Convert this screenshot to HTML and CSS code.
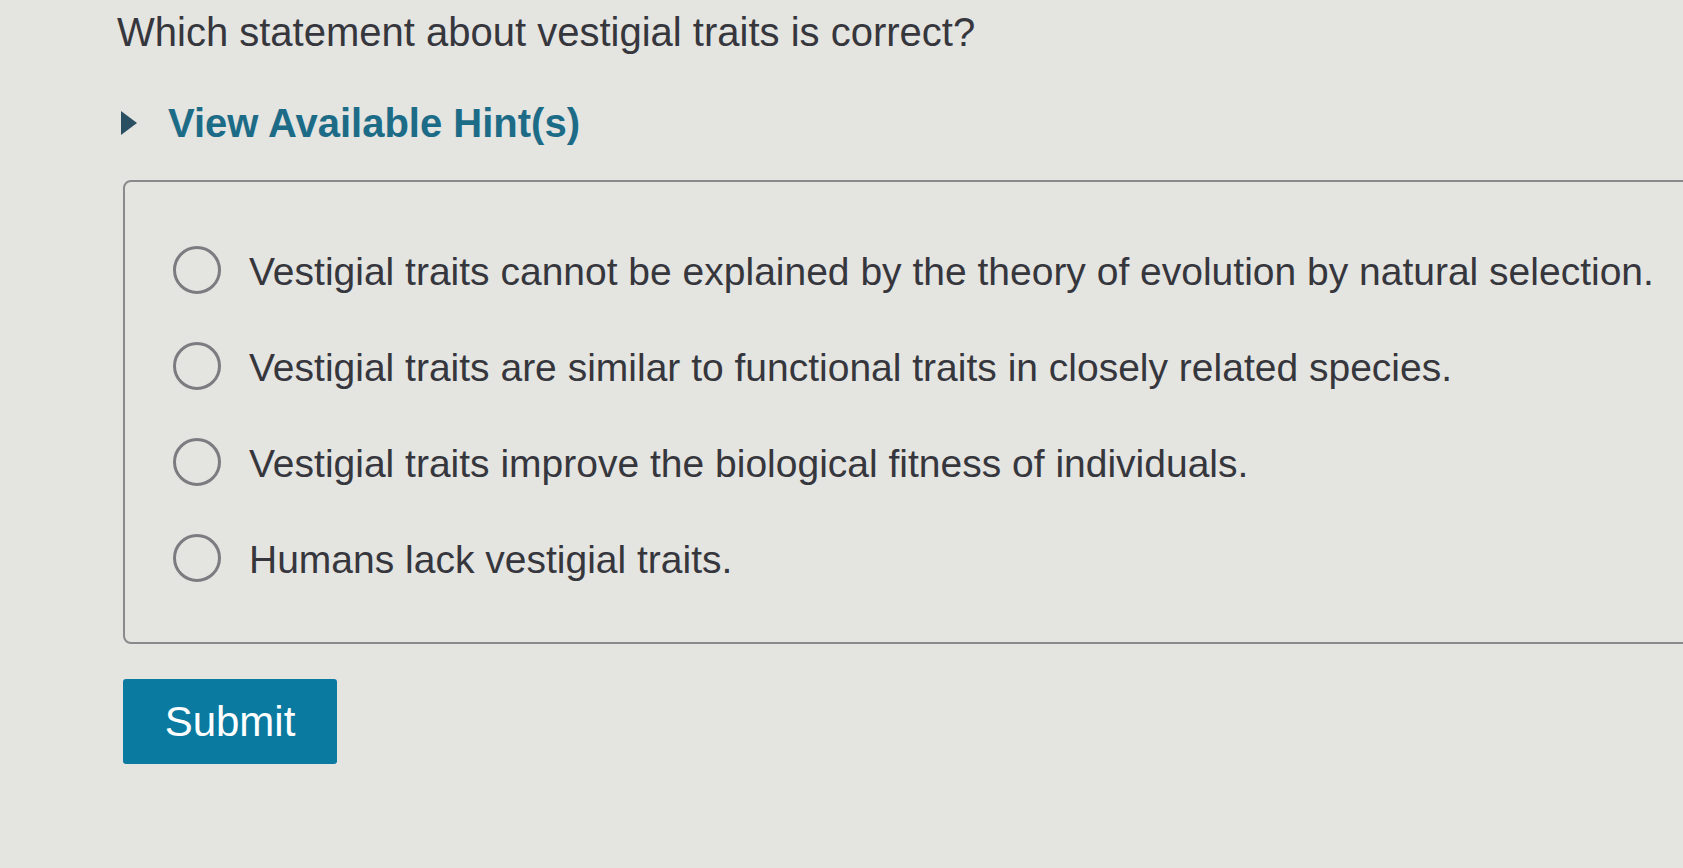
FILE: index.html
```html
<!DOCTYPE html>
<html lang="en">
<head>
    <meta charset="UTF-8">
    <meta name="viewport" content="width=device-width, initial-scale=1.0">
    <title>Vestigial traits</title>
    <link rel="stylesheet" href="styles.css">
</head>
<body>
    <div class="question">
        <h1 class="prompt">Which statement about vestigial traits is correct?</h1>

        <!-- Hints (collapsed) -->
        <div class="hint-toggle">
            <svg class="hint-arrow" width="18" height="26" viewBox="0 0 18 26">
                <path d="M1 1 L17 13 L1 25 Z" fill="#2a4f63"/>
            </svg>
            <span>View Available Hint(s)</span>
        </div>

        <!-- Choices -->
        <div class="choices">
            <label class="choice"><span class="radio"></span>Vestigial traits cannot be explained by the theory of evolution by natural selection.</label>
            <label class="choice"><span class="radio"></span>Vestigial traits are similar to functional traits in closely related species.</label>
            <label class="choice"><span class="radio"></span>Vestigial traits improve the biological fitness of individuals.</label>
            <label class="choice"><span class="radio"></span>Humans lack vestigial traits.</label>
        </div>

        <button class="submit">Submit</button>
    </div>
</body>
</html>
```

FILE: styles.css
```css
html, body {
    margin: 0;
    padding: 0;
    overflow: hidden;
}
body {
    background-color: #e4e4e1;
    font-family: "Liberation Sans", Arial, sans-serif;
    color: #36363d;
    height: 868px;
}
.question {
    padding: 9px 0 0 117px;
}
.prompt {
    margin: 0;
    font-size: 40px;
    font-weight: normal;
    line-height: 46px;
}
.hint-toggle {
    display: flex;
    align-items: center;
    gap: 30px;
    margin-top: 46px;
    margin-left: 3px;
    font-size: 40px;
    font-weight: bold;
    line-height: 44px;
    color: #1d6c87;
}
.choices {
    margin-top: 35px;
    margin-left: 6px;
    width: 1700px;
    border: 2px solid #8a8a8c;
    border-radius: 8px;
    padding: 66px 0 58px 48px;
    display: flex;
    flex-direction: column;
    gap: 48px;
}
.choice {
    display: flex;
    align-items: center;
    gap: 28px;
    font-size: 39px;
    line-height: 48px;
}
.radio {
    width: 42px;
    height: 42px;
    border: 3px solid #7c7c80;
    border-radius: 50%;
    flex-shrink: 0;
    margin-top: -4px;
}
.submit {
    margin-top: 35px;
    margin-left: 6px;
    width: 214px;
    height: 85px;
    background-color: #0b7aa1;
    color: white;
    border: none;
    border-radius: 3px;
    font-family: inherit;
    font-size: 42px;
    cursor: pointer;
}
```
